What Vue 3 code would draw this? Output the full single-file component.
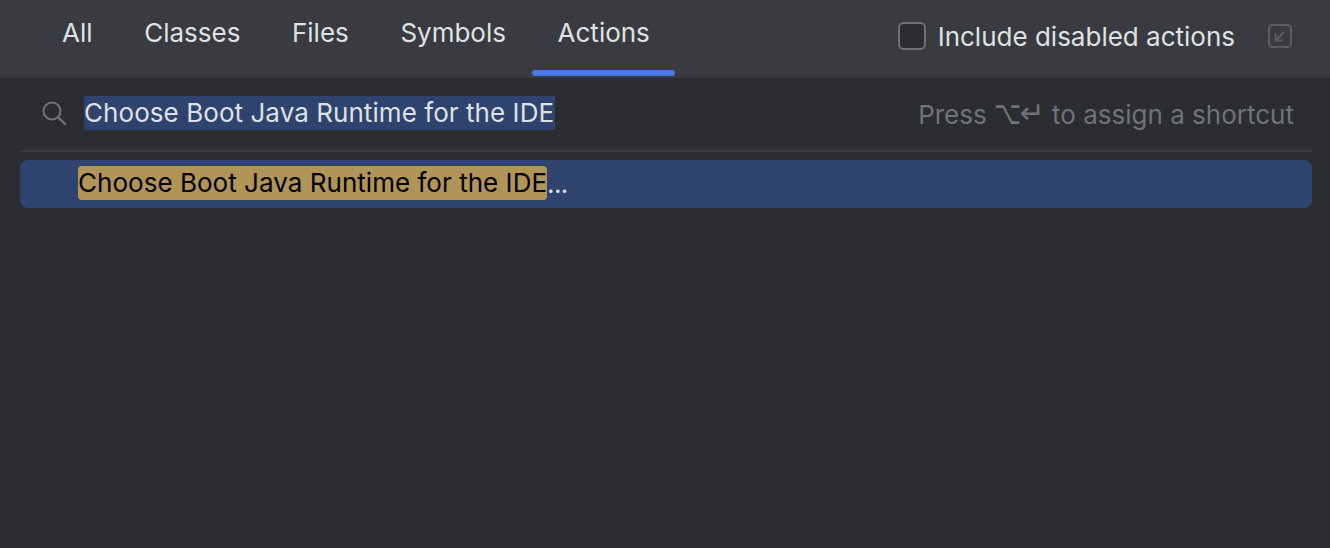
<template>
  <div class="search-popup">
    <header class="tabs-bar">
      <nav class="tabs">
        <div
          v-for="tab in tabs"
          :key="tab"
          class="tab"
          :class="{ active: tab === activeTab }"
        >
          {{ tab }}
        </div>
      </nav>
      <label class="include-toggle">
        <span class="checkbox" />
        <span class="include-label">Include disabled actions</span>
      </label>
      <svg class="collapse-icon" width="24" height="24" viewBox="0 0 24 24" fill="none">
        <rect x="1" y="1" width="22" height="22" rx="3.5" stroke="#5a5d63" stroke-width="2" />
        <path d="M16 8 L8 16 M7.5 9.5 V16.5 H14.5" stroke="#5a5d63" stroke-width="2" />
      </svg>
    </header>

    <div class="search-row">
      <svg class="search-icon" width="24" height="24" viewBox="0 0 24 24" fill="none">
        <circle cx="10" cy="10" r="8.5" stroke="#6f7377" stroke-width="2" />
        <path d="M16 16 L23.5 23.5" stroke="#6f7377" stroke-width="2.4" />
      </svg>
      <span class="query">{{ query }}</span>
      <span class="hint">Press <span class="keys"><span class="key-option">⌥</span><span class="key-enter">↵</span></span> to assign a shortcut</span>
    </div>

    <div class="divider" />

    <div class="result selected">
      <span class="match">{{ query }}</span><span class="ellipsis">...</span>
    </div>
  </div>
</template>

<script setup>
const tabs = ['All', 'Classes', 'Files', 'Symbols', 'Actions']
const activeTab = 'Actions'
const query = 'Choose Boot Java Runtime for the IDE'
</script>

<style>
html,
body {
  background: #2b2d30;
}
</style>

<style scoped>
.search-popup {
  width: 1330px;
  height: 548px;
  background: #2b2d30;
  font-family: Inter, "Liberation Sans", sans-serif;
  font-size: 26px;
  color: #dfe1e5;
  overflow: hidden;
}

.tabs-bar {
  display: flex;
  align-items: flex-start;
  height: 78px;
  padding: 0 38px 0 36px;
  box-sizing: border-box;
  background: #393b40;
}

.tabs {
  display: flex;
  flex: 1;
}

.tab {
  position: relative;
  height: 78px;
  padding: 17px 25.6px 0 26px;
  box-sizing: border-box;
  line-height: 32px;
}

/* Underline of the selected tab */
.tab.active::after {
  content: '';
  position: absolute;
  left: 0;
  right: 0;
  bottom: 2px;
  height: 6px;
  border-radius: 3px;
  background: #4a78e6;
}

.include-toggle {
  display: flex;
  align-items: center;
  gap: 12px;
  height: 28px;
  margin-top: 22px;
  line-height: 32px;
}

.include-label {
  padding-top: 2px;
}

.checkbox {
  width: 28px;
  height: 28px;
  box-sizing: border-box;
  border: 2px solid #6f7278;
  border-radius: 6px;
  background: #2b2d30;
}

.collapse-icon {
  margin: 24px 0 0 33px;
}

.search-row {
  display: flex;
  align-items: center;
  height: 72px;
  padding: 0 36px 2px 42px;
  box-sizing: border-box;
}

.search-icon {
  margin-right: 18px;
}

.query {
  height: 34px;
  padding-right: 1px;
  line-height: 34px;
  letter-spacing: 0.06px;
  background: #2e436e;
}

.hint {
  margin-left: auto;
  padding-top: 2px;
  color: #6f737a;
}

.keys {
  font-family: "DejaVu Sans", sans-serif;
  vertical-align: 2px;
}

/* DejaVu's key glyphs are squatter than the reference's, so stretch them a little */
.key-option {
  display: inline-block;
  transform: scale(0.9, 1.25);
  transform-origin: left center;
  margin-right: -1px;
}

.key-enter {
  display: inline-block;
  transform: scale(1.15, 1.15);
  transform-origin: right center;
}

.divider {
  height: 2px;
  margin: 0 18px 0 20px;
  background: #393b40;
}

.result {
  display: flex;
  align-items: center;
  height: 48px;
  margin: 8px 18px 0 20px;
  padding: 0 0 2px 58px;
  box-sizing: border-box;
  border-radius: 8px;
}

.result.selected {
  background: #2e436e;
}

.match {
  height: 34px;
  line-height: 34px;
  letter-spacing: 0.03px;
  border-radius: 4px;
  background: #b09458;
  color: #000;
}

.ellipsis {
  letter-spacing: -0.6px;
}
</style>
